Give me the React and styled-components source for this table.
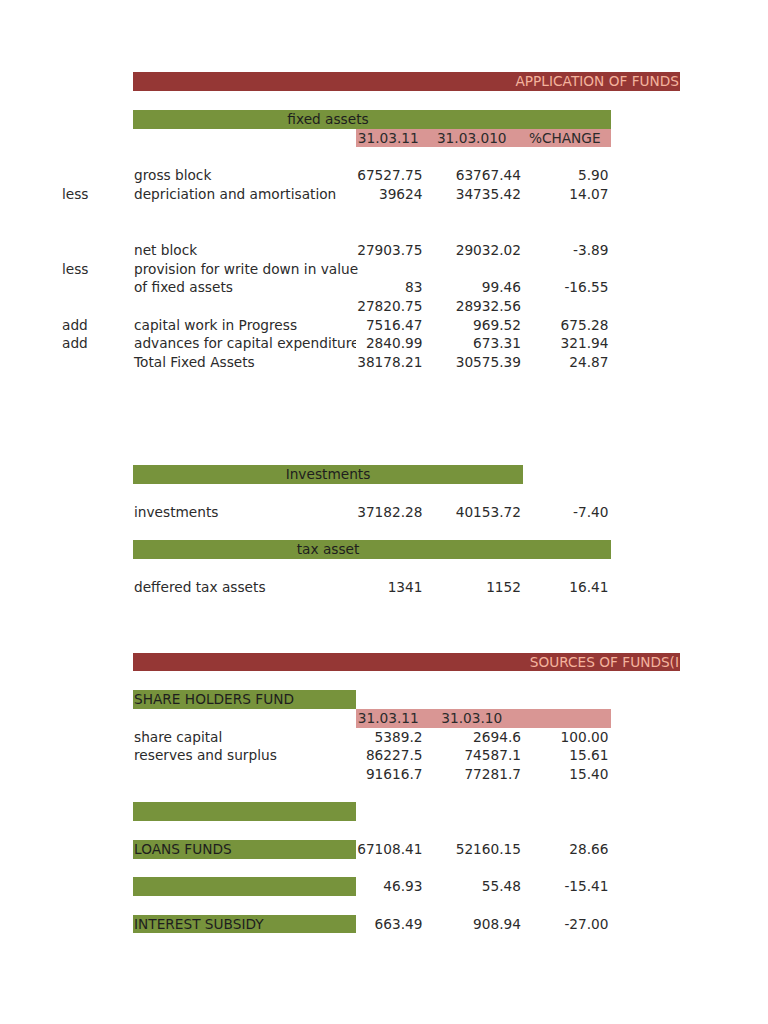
import React from "react";
import styled, { createGlobalStyle } from "styled-components";

const COLS = "133px 223px 68.5px 98.5px 87.5px 69.5px";
const ROW_H = "18.73px";
const E_WIDTH = "87.5px";

const GlobalStyle = createGlobalStyle`
  html, body {
    margin: 0;
    padding: 0;
    background: #ffffff;
  }
  body {
    font-family: "DejaVu Sans", "Liberation Sans", sans-serif;
    font-size: 13.7px;
    color: #2b2b2b;
  }
`;

const Sheet = styled.div`
  width: 768px;
  min-height: 1024px;
  box-sizing: border-box;
  padding-top: 72.4px;
  display: flex;
  flex-direction: column;
`;

const Row = styled.div`
  display: grid;
  grid-template-columns: ${COLS};
  height: ${ROW_H};
`;

const CellBase = styled.div`
  grid-column: ${(p) => p.$col} / span ${(p) => p.$span || 1};
  line-height: ${ROW_H};
  white-space: nowrap;
  overflow: hidden;
  box-sizing: border-box;
`;

const Note = styled(CellBase)`
  padding-left: 62px;
`;

const Label = styled(CellBase)`
  padding-left: 1px;
`;

const Num = styled(CellBase)`
  text-align: right;
  padding-right: 2px;
`;

const Title = styled(CellBase)`
  background: #953735;
  color: #f4b39d;
  text-align: right;
  padding-right: 1px;
  text-transform: uppercase;
`;

const Band = styled(CellBase)`
  background: #77933c;
  color: #1e1e1e;
  text-align: ${(p) => (p.$center ? "center" : "left")};
  padding-left: ${(p) => (p.$center ? "0" : "1px")};
  padding-right: ${(p) => (p.$reserve ? E_WIDTH : "0")};
`;

const Head = styled(CellBase)`
  background: #d99694;
  color: #2b2b2b;
  text-align: center;
  padding-right: 4px;
`;

const blank = { type: "blank" };
const blanks = (n) => Array.from({ length: n }, () => blank);

const rows = [
  { type: "title", text: "APPLICATION OF FUNDS" },
  blank,
  { type: "band", text: "fixed assets", span: 4, center: true, reserve: true },
  { type: "head", cells: ["31.03.11", "31.03.010", "%CHANGE"] },
  blank,
  { type: "data", label: "gross block", values: ["67527.75", "63767.44", "5.90"] },
  { type: "data", note: "less", label: "depriciation and amortisation", values: ["39624", "34735.42", "14.07"] },
  ...blanks(2),
  { type: "data", label: "net block", values: ["27903.75", "29032.02", "-3.89"] },
  { type: "data", note: "less", label: "provision for write down in value", wide: true, values: [] },
  { type: "data", label: "of fixed assets", values: ["83", "99.46", "-16.55"] },
  { type: "data", label: "", values: ["27820.75", "28932.56", ""] },
  { type: "data", note: "add", label: "capital work in Progress", values: ["7516.47", "969.52", "675.28"] },
  { type: "data", note: "add", label: "advances for capital expenditure", values: ["2840.99", "673.31", "321.94"] },
  { type: "data", label: "Total Fixed Assets", values: ["38178.21", "30575.39", "24.87"] },
  ...blanks(5),
  { type: "band", text: "Investments", span: 3, center: true },
  blank,
  { type: "data", label: "investments", values: ["37182.28", "40153.72", "-7.40"] },
  blank,
  { type: "band", text: "tax asset", span: 4, center: true, reserve: true },
  blank,
  { type: "data", label: "deffered tax assets", values: ["1341", "1152", "16.41"] },
  ...blanks(3),
  { type: "title", text: "SOURCES OF FUNDS(I" },
  blank,
  { type: "band", text: "SHARE HOLDERS FUND", span: 1 },
  { type: "head", cells: ["31.03.11", "31.03.10", ""] },
  { type: "data", label: "share capital", values: ["5389.2", "2694.6", "100.00"] },
  { type: "data", label: "reserves and surplus", values: ["86227.5", "74587.1", "15.61"] },
  { type: "data", label: "", values: ["91616.7", "77281.7", "15.40"] },
  blank,
  { type: "band", text: "", span: 1 },
  blank,
  { type: "data", label: "LOANS FUNDS", banded: true, values: ["67108.41", "52160.15", "28.66"] },
  blank,
  { type: "data", label: "", banded: true, values: ["46.93", "55.48", "-15.41"] },
  blank,
  { type: "data", label: "INTEREST SUBSIDY", banded: true, values: ["663.49", "908.94", "-27.00"] },
];

function SheetRow({ row }) {
  switch (row.type) {
    case "title":
      return (
        <Row>
          <Title $col={2} $span={5}>{row.text}</Title>
        </Row>
      );
    case "band":
      return (
        <Row>
          <Band $col={2} $span={row.span} $center={row.center} $reserve={row.reserve}>
            {row.text}
          </Band>
        </Row>
      );
    case "head":
      return (
        <Row>
          {row.cells.map((c, i) => (
            <Head key={i} $col={3 + i}>{c}</Head>
          ))}
        </Row>
      );
    case "data":
      return (
        <Row>
          {row.note && <Note $col={1}>{row.note}</Note>}
          {row.banded ? (
            <Band $col={2}>{row.label}</Band>
          ) : (
            row.label && (
              <Label $col={2} $span={row.wide ? 2 : 1}>{row.label}</Label>
            )
          )}
          {row.values.map((v, i) =>
            v ? (
              <Num key={i} $col={3 + i}>{v}</Num>
            ) : null
          )}
        </Row>
      );
    default:
      return <Row />;
  }
}

export default function App() {
  return (
    <>
      <GlobalStyle />
      <Sheet>
        {rows.map((row, i) => (
          <SheetRow key={i} row={row} />
        ))}
      </Sheet>
    </>
  );
}
